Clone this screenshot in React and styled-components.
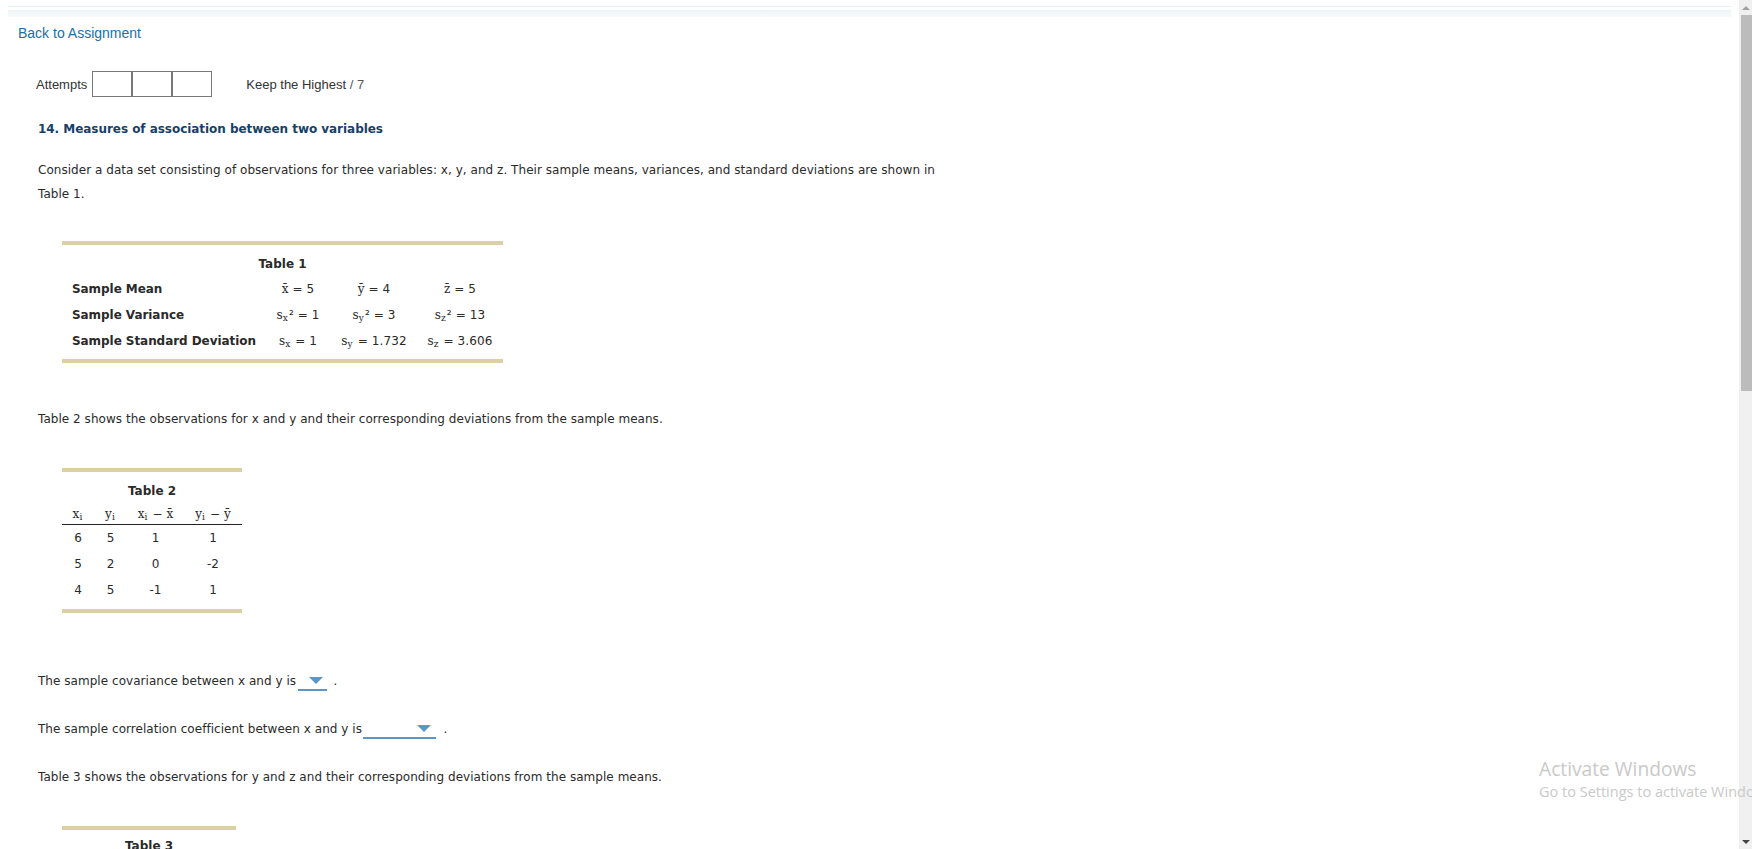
import styled, { createGlobalStyle } from "styled-components";

const Global = createGlobalStyle`
  html, body {
    margin: 0;
    height: 100%;
    overflow: hidden;
    background: #fff;
  }
`;

const Page = styled.div`
  display: flex;
  height: 849px;
  overflow: hidden;
`;
const Main = styled.div`
  flex: 1;
  min-width: 0;
  overflow: hidden;
  font-family: "DejaVu Sans", Verdana, sans-serif;
  font-size: 12px;
  color: #2a2a2a;
`;
const TopBand = styled.div`
  margin: 6px 8px 0 8px;
  height: 10px;
  border-top: 1px solid #e6eff1;
  background: linear-gradient(#fff 0 3px, #eef5f6 3px, #f7fbfb 100%);
`;
const BackLink = styled.a`
  display: block;
  margin: 8px 0 0 18px;
  font-family: "Liberation Sans", Arial, sans-serif;
  font-size: 14px;
  line-height: 16px;
  color: #1b6ea8;
`;
const AttemptsRow = styled.div`
  display: flex;
  align-items: center;
  margin: 30px 0 0 36px;
  height: 26px;
  font-family: "Liberation Sans", Arial, sans-serif;
  font-size: 13px;
  color: #333;
`;
const AttemptBoxes = styled.div`
  display: flex;
  margin: 0 34px 0 5px;
  border: 1px solid #777;
`;
const AttemptBox = styled.div`
  width: 38px;
  height: 24px;
  & + & {
    border-left: 2px solid #777;
  }
`;
const Dim = styled.span`
  color: #555;
`;
const Question = styled.div`
  margin-left: 38px;
`;
const Title = styled.h2`
  margin: 24px 0 0;
  font-size: 12px;
  line-height: 16px;
  font-weight: 700;
  letter-spacing: -0.04px;
  color: #173f6b;
`;
const Para = styled.p`
  margin: ${({ $top }) => $top}px 0 0;
  width: 915px;
  line-height: 24px;
  letter-spacing: 0.04px;
`;
const DataTable = styled.div`
  display: grid;
  grid-template-columns: ${({ $cols }) => $cols};
  width: ${({ $width }) => $width}px;
  margin: ${({ $top }) => $top}px 0 0 24px;
  border-top: 4px solid #dbcfa3;
  border-bottom: 4px solid #dbcfa3;
`;
const Caption = styled.div`
  grid-column: 1 / -1;
  text-align: center;
  font-weight: 700;
  line-height: 24px;
  padding-top: ${({ $pad }) => $pad || 7}px;
`;
const RowLabel = styled.div`
  font-weight: 700;
  line-height: 26px;
  padding-left: 10px;
  white-space: nowrap;
  letter-spacing: -0.06px;
`;
const Cell = styled.div`
  text-align: center;
  line-height: 26px;
  white-space: nowrap;
  letter-spacing: 0.1px;
`;
const HeadCell = styled(Cell)`
  border-bottom: 1px solid #222;
  line-height: 20px;
  padding-top: 1px;
`;
const Var = styled.span`
  font-family: "DejaVu Serif", serif;
  sub {
    font-size: 9px;
    line-height: 0;
    vertical-align: -2px;
    margin-right: 1px;
  }
`;
const Spacer = styled.div`
  grid-column: 1 / -1;
  height: ${({ $h }) => $h}px;
`;
const Blank = styled.span`
  display: inline-flex;
  justify-content: flex-end;
  align-items: flex-start;
  box-sizing: border-box;
  width: ${({ $width }) => $width}px;
  height: 14px;
  margin: 0 7px 0 1.5px;
  padding-right: ${({ $pad }) => $pad}px;
  border-bottom: 2px solid #5b96c8;
  vertical-align: 1px;
`;
const Arrow = styled.span`
  width: 0;
  height: 0;
  border-left: 7px solid transparent;
  border-right: 7px solid transparent;
  border-top: 7px solid #5b96c8;
`;
const Scrollbar = styled.div`
  display: flex;
  flex-direction: column;
  align-items: center;
  width: 13px;
  background: #f0f0f0;
`;
const ScrollButton = styled.div`
  flex: none;
  height: 15px;
  display: flex;
  align-items: center;
  justify-content: center;
  &::before {
    content: "";
    border-left: 4px solid transparent;
    border-right: 4px solid transparent;
    ${({ $down }) => ($down ? "border-top" : "border-bottom")}: 4px solid ${({ $down }) => ($down ? "#444" : "#a0a0a0")};
  }
`;
const Thumb = styled.div`
  flex: none;
  width: 11px;
  height: 376px;
  margin-left: 2px;
  background: #bcbcbc;
`;
const Track = styled.div`
  flex: 1;
`;
const Watermark = styled.div`
  position: absolute;
  left: 1539px;
  top: 757px;
  width: 213px;
  overflow: hidden;
  white-space: nowrap;
  font-family: "Open Sans", sans-serif;
  color: #c9c9c9;
  font-size: 14.5px;
  line-height: 22px;
  strong {
    display: block;
    font-size: 19.2px;
    font-weight: 400;
    line-height: 24px;
  }
`;

const table1 = [
  ["Sample Mean", <><Var>x̄</Var> = 5</>, <><Var>ȳ</Var> = 4</>, <><Var>z̄</Var> = 5</>],
  ["Sample Variance", <><Var>s<sub>x</sub></Var>² = 1</>, <><Var>s<sub>y</sub></Var>² = 3</>, <><Var>s<sub>z</sub></Var>² = 13</>],
  ["Sample Standard Deviation", <><Var>s<sub>x</sub></Var> = 1</>, <><Var>s<sub>y</sub></Var> = 1.732</>, <><Var>s<sub>z</sub></Var> = 3.606</>],
];
const table2 = [
  [6, 5, 1, 1],
  [5, 2, 0, -2],
  [4, 5, -1, 1],
];

const App = () => {
  return (
    <Page>
      <Global />
      <Main>
        <TopBand />
        <BackLink>Back to Assignment</BackLink>
        <AttemptsRow>
          Attempts
          <AttemptBoxes>
            <AttemptBox />
            <AttemptBox />
            <AttemptBox />
          </AttemptBoxes>
          Keep the Highest&nbsp;<Dim>/ 7</Dim>
        </AttemptsRow>
        <Question>
          <Title>14. Measures of association between two variables</Title>
          <Para $top={21}>
            Consider a data set consisting of observations for three variables: x, y, and z. Their sample means, variances, and standard deviations are shown in Table 1.
          </Para>
          <DataTable $top={35} $width={441} $cols="203px 66px 86px 86px">
            <Caption>Table 1</Caption>
            {table1.map((row) => (
              <>
                <RowLabel key={row[0]}>{row[0]}</RowLabel>
                <Cell>{row[1]}</Cell>
                <Cell>{row[2]}</Cell>
                <Cell>{row[3]}</Cell>
              </>
            ))}
            <Spacer $h={5} />
          </DataTable>
          <Para $top={44}>Table 2 shows the observations for x and y and their corresponding deviations from the sample means.</Para>
          <DataTable $top={37} $width={180} $cols="32px 33px 57px 58px">
            <Caption>Table 2</Caption>
            <HeadCell><Var>x<sub>i</sub></Var></HeadCell>
            <HeadCell><Var>y<sub>i</sub></Var></HeadCell>
            <HeadCell><Var>x<sub>i</sub> − x̄</Var></HeadCell>
            <HeadCell><Var>y<sub>i</sub> − ȳ</Var></HeadCell>
            {table2.map((row) => row.map((v, i) => <Cell key={`${row}-${i}`}>{v}</Cell>))}
            <Spacer $h={6} />
          </DataTable>
          <Para $top={56}>
            The sample covariance between x and y is
            <Blank $width={29} $pad={4}><Arrow /></Blank>.
          </Para>
          <Para $top={24}>
            The sample correlation coefficient between x and y is
            <Blank $width={73} $pad={5}><Arrow /></Blank>.
          </Para>
          <Para $top={24}>Table 3 shows the observations for y and z and their corresponding deviations from the sample means.</Para>
          <DataTable $top={37} $width={174} $cols="1fr">
            <Caption $pad={4}>Table 3</Caption>
            <Spacer $h={40} />
          </DataTable>
        </Question>
      </Main>
      <Scrollbar>
        <ScrollButton />
        <Thumb />
        <Track />
        <ScrollButton $down />
      </Scrollbar>
      <Watermark>
        <strong>Activate Windows</strong>
        Go to Settings to activate Windows.
      </Watermark>
    </Page>
  );
};

export default App;
